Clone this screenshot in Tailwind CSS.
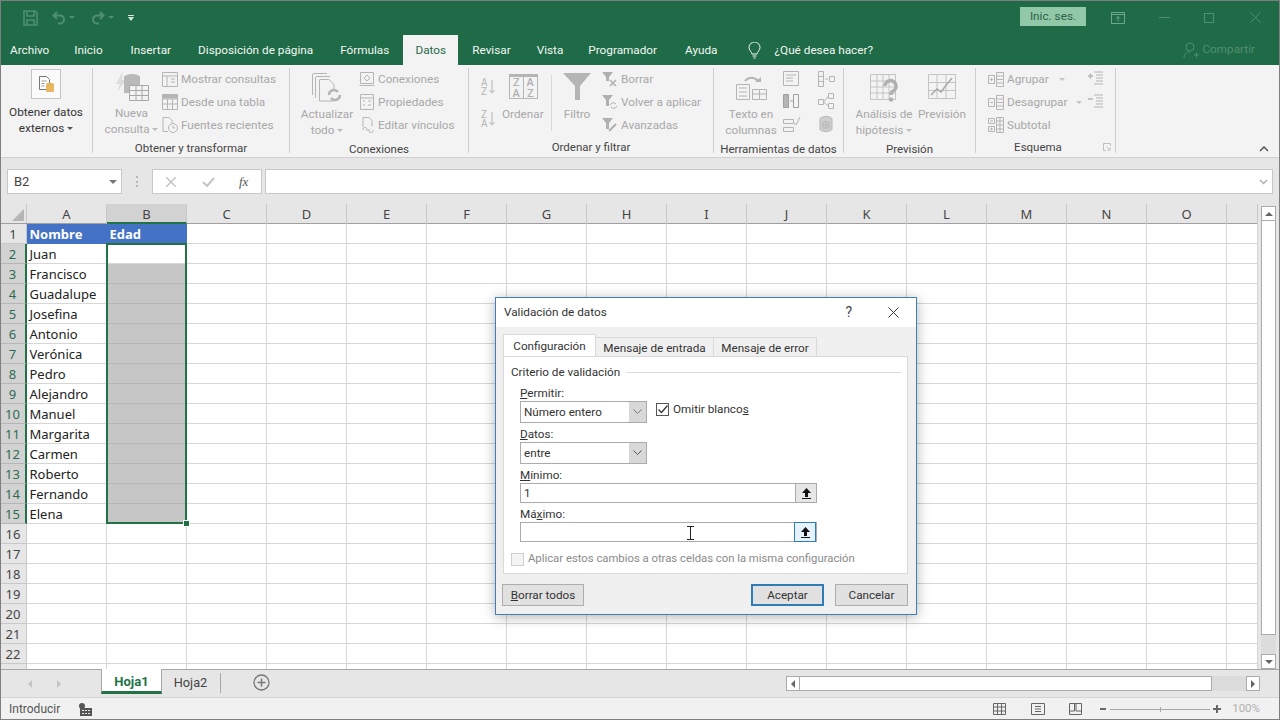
<!DOCTYPE html>
<html lang="es">
<head>
  <meta charset="UTF-8">
  <title>Validación de datos - Excel</title>
  <script src="https://cdn.jsdelivr.net/npm/@tailwindcss/browser@4"></script>
</head>
<body class="overflow-hidden bg-white">
<div class="relative w-[1280px] h-[720px] overflow-hidden flex flex-col font-['Roboto',sans-serif] text-[12px] text-[#333]">

  <!-- title bar -->
  <div class="h-[35px] bg-[#1f6b47] flex items-center shrink-0">
    <svg class="ml-[23px]" width="15" height="16" viewBox="0 0 15 16" fill="none" stroke="#4f8f70" stroke-width="1.6"><path d="M1 1h11l2 2v12H1zM4 1v5h7V1M4 15v-5h7v5"/></svg>
    <svg class="ml-[14px]" width="14" height="14" viewBox="0 0 14 14" fill="none" stroke="#4f8f70" stroke-width="2"><path d="M5 1 1.500 4.500 5 8M2 4.500h6a4 4 0 0 1 4 4v0a4 4 0 0 1-4 4H6"/></svg>
    <span class="ml-[3px] w-0 h-0 border-x-[3px] border-x-transparent border-t-[3px] border-t-[#4f8f70]"></span>
    <svg class="ml-[16px]" width="14" height="14" viewBox="0 0 14 14" fill="none" stroke="#4f8f70" stroke-width="2"><path d="M9 1l3.500 3.500L9 8M12 4.500H6a4 4 0 0 0-4 4v0a4 4 0 0 0 4 4h2"/></svg>
    <span class="ml-[3px] w-0 h-0 border-x-[3px] border-x-transparent border-t-[3px] border-t-[#4f8f70]"></span>
    <span class="ml-[14px] flex flex-col items-center gap-[1px]">
      <span class="w-[6px] h-[1px] bg-[#d5e6dc]"></span>
      <span class="w-0 h-0 border-x-[3px] border-x-transparent border-t-[4px] border-t-[#d5e6dc]"></span>
    </span>
    <div class="ml-auto flex items-center">
      <span class="w-[66px] h-[19px] mt-[-2px] bg-[#90c8a8] text-[#2f5f47] flex items-center justify-center text-[11.750px]">Inic. ses.</span>
      <svg class="ml-[25px]" width="14" height="12" viewBox="0 0 14 12" fill="none" stroke="#6ea78a"><path d="M.5.500h13v11H.500zM.5 2.500h13M7 9.500V4.500M5 6.500l2-2 2 2"/></svg>
      <span class="ml-[34px] w-[11px] h-[1px] bg-[#4f8f70]"></span>
      <span class="ml-[34px] w-[10px] h-[10px] border border-[#4f8f70]"></span>
      <svg class="ml-[36px] mr-[19px]" width="11" height="11" viewBox="0 0 11 11" stroke="#4f8f70"><path d="M.5.500l10 10M10.500.500l-10 10"/></svg>
    </div>
  </div>

  <!-- ribbon tabs -->
  <div class="h-[30px] bg-[#1f6b47] flex items-stretch shrink-0 text-[11.750px] text-[#f2f7f4]">
    <span class="ml-[10px] leading-[30px]">Archivo</span>
    <span class="ml-[25px] leading-[30px]">Inicio</span>
    <span class="ml-[28px] leading-[30px]">Insertar</span>
    <span class="ml-[27px] leading-[30px]">Disposición de página</span>
    <span class="ml-[27px] leading-[30px]">Fórmulas</span>
    <span class="ml-[14px] w-[55px] bg-[#f3f3f3] text-[#1f6b47] text-center leading-[30px]">Datos</span>
    <span class="ml-[14px] leading-[30px]">Revisar</span>
    <span class="ml-[26px] leading-[30px]">Vista</span>
    <span class="ml-[25px] leading-[30px]">Programador</span>
    <span class="ml-[28px] leading-[30px]">Ayuda</span>
    <svg class="ml-[31px] self-center" width="13" height="17" viewBox="0 0 13 17" fill="none" stroke="#f2f7f4"><path d="M4 12c0-2-3-3.500-3-6.500a5.500 5.500 0 0 1 11 0c0 3-3 4.500-3 6.500zM4.500 14h4M5.500 16h2"/></svg>
    <span class="ml-[13px] leading-[30px]">¿Qué desea hacer?</span>
    <div class="ml-auto mr-[25px] flex items-center text-[#4f8f70]">
      <svg width="16" height="17" viewBox="0 0 16 17" fill="none" stroke="#4f8f70"><circle cx="7" cy="5" r="4"/><path d="M1 16c0-4 2.500-6 6-6M11 13h5M13.500 10.500v5"/></svg>
      <span class="ml-[3px]">Compartir</span>
    </div>
  </div>

  <!-- ribbon -->
  <div class="h-[93px] bg-[#f3f3f3] border-b border-[#d0d0d0] flex shrink-0 text-[#a8a8a8] text-[11.750px] leading-[16px] relative">
    <!-- Obtener datos externos -->
    <div class="w-[93px] h-[85px] mt-[3px] border-r border-[#cfcfcf] flex flex-col items-center shrink-0">
      <div class="w-[30px] h-[30px] mt-[1px] bg-[#fafafa] border border-[#c4c4c4] flex items-center justify-center">
        <svg width="15" height="16" viewBox="0 0 15 16" fill="none"><path d="M.5.500h7l3 3v10h-10z" fill="#fff" stroke="#777"/><path d="M2.500 5h5M2.500 7.500h3M2.500 10h3" stroke="#999"/><rect x="7" y="7" width="8" height="9" rx="1.500" fill="#e9b660"/></svg>
      </div>
      <span class="mt-[5px] text-[#333]">Obtener datos</span>
      <span class="text-[#333]">externos <span class="inline-block align-middle w-0 h-0 border-x-[3px] border-x-transparent border-t-[3px] border-t-[#555]"></span></span>
    </div>

    <!-- Obtener y transformar -->
    <div class="w-[197px] h-[85px] mt-[3px] border-r border-[#cfcfcf] flex flex-col shrink-0">
      <div class="h-[72px] flex">
        <div class="w-[69px] ml-[4px] flex flex-col items-center">
          <svg class="mt-[3px]" width="34" height="30" viewBox="0 0 34 30"><path d="M8 0 1 13h4l-3 8 9-12H7z" fill="#dcdcdc"/><ellipse cx="17" cy="6" rx="8" ry="3" fill="#b9b9b9"/><path d="M9 6v16h16V6z" fill="#b9b9b9"/><path d="M14.500 14.500h19v15h-19zM14.500 19.500h19M14.500 24.500h19M21 14.500v15M27 14.500v15" fill="#f3f3f3" stroke="#a8a8a8"/></svg>
          <span class="mt-[4px]">Nueva</span>
          <span>consulta <span class="inline-block align-middle w-0 h-0 border-x-[3px] border-x-transparent border-t-[3px] border-t-[#bbb]"></span></span>
        </div>
        <div class="ml-[-4px] flex flex-col gap-[1px]">
          <div class="h-[22px] flex items-center"><svg width="16" height="15" viewBox="0 0 16 15" fill="none" stroke="#b5b5b5"><path d="M.5.500h15v14H.500zM.5 4h15M5 4v10.500M9 7h4M9 10h4"/></svg><span class="ml-[3px]">Mostrar consultas</span></div>
          <div class="h-[22px] flex items-center"><svg width="16" height="16" viewBox="0 0 16 16" fill="none" stroke="#b5b5b5"><path d="M.5.500h15v15H.500zM.5 5h15M.5 10h15M5.500 5v10.500M10.500 5v10.500"/><path d="M1 1h14v3H1z" fill="#b5b5b5"/></svg><span class="ml-[3px]">Desde una tabla</span></div>
          <div class="h-[22px] flex items-center"><svg width="16" height="16" viewBox="0 0 16 16" fill="none" stroke="#b5b5b5"><path d="M6 14.500H1V.500h6l3 3v3"/><circle cx="11" cy="11" r="4.500" fill="#f3f3f3"/><path d="M11 8.500V11h2"/></svg><span class="ml-[3px]">Fuentes recientes</span></div>
        </div>
      </div>
      <div class="text-center text-[#444] text-[11.500px] pt-[3px]">Obtener y transformar</div>
    </div>

    <!-- Conexiones -->
    <div class="w-[179px] h-[85px] mt-[3px] border-r border-[#cfcfcf] flex flex-col shrink-0">
      <div class="h-[72px] flex">
        <div class="w-[62px] ml-[6px] flex flex-col items-center">
          <svg class="mt-[5px]" width="30" height="30" viewBox="0 0 30 30" fill="none" stroke="#b5b5b5"><path d="M1 .500h14M.5 1v21M4 3.500h14M3.500 4v21M7.500 7v21h14M7.500 6.500H17l5 5v5"/><path d="M17 22a5 5 0 0 1 9-3M28 22a5 5 0 0 1-9 3" stroke-width="2.500"/></svg>
          <span class="mt-[3px]">Actualizar</span>
          <span>todo <span class="inline-block align-middle w-0 h-0 border-x-[3px] border-x-transparent border-t-[3px] border-t-[#bbb]"></span></span>
        </div>
        <div class="ml-[1px] flex flex-col gap-[1px]">
          <div class="h-[22px] flex items-center"><svg width="16" height="15" viewBox="0 0 16 15" fill="none" stroke="#b5b5b5"><path d="M1.500.500h13v11h-13zM.5 13.500h15M8 3l3 3-3 3-3-3z"/></svg><span class="ml-[3px]">Conexiones</span></div>
          <div class="h-[22px] flex items-center"><svg width="16" height="16" viewBox="0 0 16 16" fill="none" stroke="#b5b5b5"><path d="M1.500.500h13v15h-13zM1.500 4h13M4 7h2M9 7h3M4 11h2M9 11h3"/></svg><span class="ml-[3px]">Propiedades</span></div>
          <div class="h-[22px] flex items-center"><svg width="16" height="16" viewBox="0 0 16 16" fill="none" stroke="#b5b5b5"><path d="M4 10V.500h6l3 3V9"/><path d="M4 13a2 2 0 0 1 4-1M14 13a2 2 0 0 1-4 1M7 13h4"/></svg><span class="ml-[3px]">Editar vínculos</span></div>
        </div>
      </div>
      <div class="text-center text-[#444] text-[11.500px] pt-[3px]">Conexiones</div>
    </div>

    <!-- Ordenar y filtrar -->
    <div class="w-[245px] h-[85px] mt-[3px] border-r border-[#cfcfcf] flex flex-col shrink-0">
      <div class="h-[72px] flex">
        <div class="w-[82px] ml-[12px] flex flex-col">
          <div class="flex items-start h-[45px]">
            <div class="w-[20px] flex flex-col gap-[14px] mt-[10px] text-[10px] leading-[9px] text-[#b5b5b5]">
              <div class="flex items-center"><span class="flex flex-col"><span>A</span><span>Z</span></span><svg class="ml-[1px]" width="6" height="14" viewBox="0 0 6 14" fill="none" stroke="#b5b5b5"><path d="M3 0v13M.5 10 3 13l2.500-3"/></svg></div>
              <div class="flex items-center"><span class="flex flex-col"><span>Z</span><span>A</span></span><svg class="ml-[1px]" width="6" height="14" viewBox="0 0 6 14" fill="none" stroke="#b5b5b5"><path d="M3 0v13M.5 10 3 13l2.500-3"/></svg></div>
            </div>
            <div class="ml-[8px] mt-[6px] w-[29px] h-[25px] border border-[#b5b5b5] border-t-[3px] grid grid-cols-2 text-[11px] leading-[11px] text-center font-medium text-[#b0b0b0]">
              <span class="border-r border-[#b5b5b5]">Z<br>A</span><span>A<br>Z</span>
            </div>
          </div>
          <span class="ml-[21px] mt-[-7px]">Ordenar</span>
        </div>
        <div class="w-[1px] h-[56px] mt-[7px] ml-[-12px] bg-[#d8d8d8]"></div>
        <div class="w-[50px] flex flex-col items-center">
          <svg class="mt-[5px]" width="28" height="28" viewBox="0 0 28 28"><path d="M0 0h28L17 13v14h-5V13z" fill="#b5b5b5"/></svg>
          <span class="mt-[5px]">Filtro</span>
        </div>
        <div class="flex flex-col gap-[1px]">
          <div class="h-[22px] flex items-center"><svg width="16" height="15" viewBox="0 0 16 15" fill="none"><path d="M0 0h11L7 5v4H4V5z" fill="#b0b0b0"/><path d="M8 8l6 6M14 8l-6 6" stroke="#b0b0b0" stroke-width="1.500"/></svg><span class="ml-[3px]">Borrar</span></div>
          <div class="h-[22px] flex items-center"><svg width="16" height="15" viewBox="0 0 16 15" fill="none"><path d="M0 0h11L7 5v6H4V5z" fill="#b0b0b0"/><path d="M8 10a3.500 3.500 0 0 1 6-1M15 11a3.500 3.500 0 0 1-6 1" stroke="#b0b0b0"/></svg><span class="ml-[3px]">Volver a aplicar</span></div>
          <div class="h-[22px] flex items-center"><svg width="16" height="15" viewBox="0 0 16 15" fill="none"><path d="M0 0h11L7 5v6H4V5z" fill="#b0b0b0"/><path d="M7 13l7-7" stroke="#b0b0b0" stroke-width="2"/></svg><span class="ml-[3px]">Avanzadas</span></div>
        </div>
      </div>
      <div class="text-center text-[#444] text-[11.500px] pt-[3px]">Ordenar y filtrar</div>
    </div>

    <!-- Herramientas de datos -->
    <div class="w-[130px] h-[85px] mt-[3px] border-r border-[#cfcfcf] flex flex-col shrink-0">
      <div class="h-[72px] flex">
        <div class="w-[60px] ml-[7px] flex flex-col items-center">
          <svg class="mt-[5px]" width="31" height="28" viewBox="0 0 31 28" fill="none" stroke="#b5b5b5"><path d="M.5 11.500h13v15H.500zM3 15h8M3 19h8M3 23h8M16.500 16.500h14v10h-14zM16.500 21h14M23.500 16.500v10"/><path d="M9 8a8 8 0 0 1 13 0" stroke-width="2"/><path d="M19 9h6V4z" fill="#b5b5b5" stroke="none"/></svg>
          <span class="mt-[5px]">Texto en</span>
          <span>columnas</span>
        </div>
        <div class="ml-[2px] grid grid-cols-2 grid-rows-3 w-[53px] h-[69px] gap-x-[17px]">
          <svg class="mt-[3px]" width="16" height="16" viewBox="0 0 16 16" fill="none" stroke="#b5b5b5"><path d="M.5.500h15v14H.500zM3 4h10M3 7h7M3 10h7"/></svg>
          <svg class="mt-[3px]" width="18" height="16" viewBox="0 0 18 16" fill="none" stroke="#b5b5b5"><path d="M.5.500h5v15h-5zM.5 5.500h5M.5 10.500h5M11.500 5.500h5v5h-5zM7 8h3"/></svg>
          <svg class="mt-[2px]" width="16" height="16" viewBox="0 0 16 16" fill="#b5b5b5" stroke="#a0a0a0"><path d="M.5 1.500h5v13h-5z"/><path d="M10.500 1.500h5v13h-5z" fill="none"/><path d="M7 8h3"/></svg>
          <svg class="mt-[2px]" width="16" height="16" viewBox="0 0 16 16" fill="none" stroke="#b5b5b5"><path d="M.5 6.500h5v5h-5zM10.500.500h5v5h-5zM10.500 10.500h5v5h-5zM5.500 9l5-6M5.500 9l5 4"/></svg>
          <svg class="mt-[2px]" width="19" height="17" viewBox="0 0 19 17" fill="none" stroke="#b5b5b5"><path d="M.5 3.500h10v4H.500zM.5 11.500h10v4H.500zM10 6l3 3 4-8"/></svg>
          <svg class="mt-[2px]" width="16" height="16" viewBox="0 0 16 16" fill="#cfcfcf" stroke="#b5b5b5"><path d="M2 3a6 2.500 0 0 1 12 0v10a6 2.500 0 0 1-12 0z"/><path d="M5 6h6v6H5zM8 6v6M5 9h6" fill="none"/></svg>
        </div>
      </div>
      <div class="text-center text-[#444] text-[11.500px] pt-[3px]">Herramientas de datos</div>
    </div>

    <!-- Previsión -->
    <div class="w-[132px] h-[85px] mt-[3px] border-r border-[#cfcfcf] flex flex-col shrink-0">
      <div class="h-[72px] flex">
        <div class="w-[76px] ml-[2px] flex flex-col items-center">
          <svg class="mt-[6px]" width="29" height="29" viewBox="0 0 29 29" fill="none" stroke="#c4c4c4"><path d="M.5.500h25v25H.500zM.5 7h25M.5 13h25M.5 19h25M7 .500v25M13 .500v25M19 .500v25"/><path d="M15 12a5.500 5.500 0 1 1 8 5c-2 1-2 2-2 4" stroke="#b0b0b0" stroke-width="3.500"/><path d="M19.500 24h3v3h-3z" fill="#b0b0b0" stroke="#b0b0b0"/></svg>
          <span class="mt-[3px]">Análisis de</span>
          <span>hipótesis <span class="inline-block align-middle w-0 h-0 border-x-[3px] border-x-transparent border-t-[3px] border-t-[#bbb]"></span></span>
        </div>
        <div class="w-[52px] ml-[-6px] flex flex-col items-center">
          <svg class="mt-[6px]" width="28" height="25" viewBox="0 0 28 25" fill="none" stroke="#c4c4c4"><path d="M.5.500h27v24H.500zM.5 8.500h27M.5 16.500h27M9 .500v24M18 .500v24"/><path d="M3 21l6-6 4 3 6-8 5-6" stroke="#a8a8a8" stroke-width="1.500"/></svg>
          <span class="mt-[7px]">Previsión</span>
        </div>
      </div>
      <div class="text-center text-[#444] text-[11.500px] pt-[3px]">Previsión</div>
    </div>

    <!-- Esquema -->
    <div class="w-[140px] h-[85px] mt-[3px] border-r border-[#cfcfcf] flex flex-col shrink-0 relative">
      <div class="h-[72px] flex">
        <div class="ml-[12px] w-[100px] flex flex-col gap-[1px]">
          <div class="h-[22px] flex items-center"><svg width="16" height="15" viewBox="0 0 16 15" fill="none" stroke="#b5b5b5"><path d="M.5 3.500h6v8h-6zM2 7.500h3M3.500 6v3M8.500.500h7v14h-7zM8.500 4h7M8.500 7.500h7M8.500 11h7"/></svg><span class="ml-[3px]">Agrupar</span><span class="ml-[10px] w-0 h-0 border-x-[3px] border-x-transparent border-t-[3px] border-t-[#c4c4c4]"></span></div>
          <div class="h-[22px] flex items-center"><svg width="16" height="15" viewBox="0 0 16 15" fill="none" stroke="#b5b5b5"><path d="M.5 3.500h6v8h-6zM2 7.500h3M8.500.500h7v14h-7zM8.500 4h7M8.500 7.500h7M8.500 11h7"/></svg><span class="ml-[3px]">Desagrupar</span><span class="ml-[9px] w-0 h-0 border-x-[3px] border-x-transparent border-t-[3px] border-t-[#c4c4c4]"></span></div>
          <div class="h-[22px] flex items-center"><svg width="16" height="16" viewBox="0 0 16 16" fill="none" stroke="#b5b5b5"><path d="M.5 1.500h6v5h-6zM.5 9.500h6v5h-6zM8.500.500h7v15h-7zM8.500 4h7M8.500 8h7M8.500 12h7M12 .500v15M2 4h3M2 12h3M3.500 10.500v3"/></svg><span class="ml-[3px]">Subtotal</span></div>
        </div>
        <div class="flex flex-col gap-[8px] mt-[3px]">
          <svg width="15" height="15" viewBox="0 0 15 15" fill="none" stroke="#b5b5b5"><path d="M6 1h9M8 4h7M8 7h7M8 10h7M6 13h9"/><path d="M0 5h5M2.500 2.500v5" stroke-width="1.500"/></svg>
          <svg width="15" height="15" viewBox="0 0 15 15" fill="none" stroke="#b5b5b5"><path d="M6 1h9M8 4h7M8 7h7M8 10h7M6 13h9"/><path d="M0 5h5" stroke-width="1.500"/></svg>
        </div>
      </div>
      <div class="text-[#444] text-[11.500px] pt-[3px] w-[124px] text-center">Esquema</div>
      <svg class="absolute left-[127px] top-[75px]" width="8" height="8" viewBox="0 0 8 8" fill="none" stroke="#c0c0c0"><path d="M7.500 3V.500H.500v7H3M4 4l3 3M7 4.500V7H4.500"/></svg>
    </div>
    <svg class="absolute left-[1259px] top-[81px]" width="10" height="6" viewBox="0 0 10 6" fill="none" stroke="#555" stroke-width="1.500"><path d="M1 5l4-4 4 4"/></svg>
  </div>

  <!-- formula bar -->
  <div class="h-[46px] bg-[#e6e6e6] flex items-center shrink-0 pt-[1px]">
    <div class="ml-[7px] w-[115px] h-[25px] bg-white border border-[#c8c8c8] flex items-center pl-[6px] text-[13px] text-[#444]">
      B2
      <span class="ml-auto mr-[4px] w-0 h-0 border-x-[4px] border-x-transparent border-t-[4px] border-t-[#777]"></span>
    </div>
    <div class="ml-[14px] w-[2px] h-[11px] border-l-2 border-dotted border-[#b5b5b5]"></div>
    <div class="ml-[14px] w-[110px] h-[25px] bg-white border border-[#c8c8c8] flex items-center">
      <svg class="ml-[13px]" width="10" height="10" viewBox="0 0 10 10" stroke="#c4c4c4" stroke-width="1.500"><path d="M0 0l10 10M10 0 0 10"/></svg>
      <svg class="ml-[26px]" width="13" height="10" viewBox="0 0 13 10" fill="none" stroke="#c4c4c4" stroke-width="2"><path d="M1 5l4 4 7-8"/></svg>
      <span class="ml-[24px] text-[13px] italic font-['Liberation_Serif',serif] text-[#555]">fx</span>
    </div>
    <div class="ml-[3px] w-[1008px] h-[25px] bg-white border border-[#c8c8c8] flex items-center justify-end pr-[4px]">
      <svg width="9" height="6" viewBox="0 0 9 6" fill="none" stroke="#b0b0b0" stroke-width="1.500"><path d="M1 1l3.500 3.500L8 1"/></svg>
    </div>
  </div>

  <!-- sheet -->
  <div class="h-[465px] flex shrink-0 bg-[#e6e6e6]">
    <div id="grid" class="w-[1258px] relative overflow-hidden bg-white font-['Noto_Sans',sans-serif] text-[13px] leading-[20px] text-[#222]">
      <!-- selection of B2:B15 -->
      <div class="absolute left-[106px] top-[39px] w-[81px] h-[281px] border-2 border-[#217346] pointer-events-none"></div>
      <div class="absolute left-[184px] top-[317px] w-[5px] h-[5px] bg-[#217346] outline outline-white pointer-events-none"></div>
    </div>
    <!-- vertical scrollbar -->
    <div class="w-[22px] flex flex-col pl-[3px] pr-[4px] pt-[2px]">
      <div class="h-[15px] bg-white border border-[#ababab] flex items-center justify-center shrink-0"><span class="w-0 h-0 border-x-[4px] border-x-transparent border-b-[4px] border-b-[#666]"></span></div>
      <div class="h-[414px] bg-white border-x border-b border-[#ababab] shrink-0"></div>
      <div class="flex-1 bg-[#dcdcdc]"></div>
      <div class="h-[15px] bg-white border border-[#ababab] flex items-center justify-center shrink-0"><span class="w-0 h-0 border-x-[4px] border-x-transparent border-t-[4px] border-t-[#666]"></span></div>
    </div>
  </div>

  <!-- sheet tabs -->
  <div class="h-[28px] bg-[#e6e6e6] border-t border-[#a6a6a6] flex shrink-0 relative">
    <div class="w-[101px] flex items-center shrink-0">
      <span class="ml-[28px] w-0 h-0 border-y-[4px] border-y-transparent border-r-[4px] border-r-[#c4c4c4]"></span>
      <span class="ml-[25px] w-0 h-0 border-y-[4px] border-y-transparent border-l-[4px] border-l-[#c4c4c4]"></span>
    </div>
    <div class="w-[61px] h-[25px] mt-[-1px] bg-white border-x border-[#a6a6a6] border-b-[3px] border-b-[#217346] text-center text-[13px] font-bold text-[#217346] leading-[25px]">Hoja1</div>
    <div class="w-[59px] h-[20px] mt-[3px] border-r border-[#a6a6a6] text-center text-[12.750px] text-[#444] leading-[19px] pr-[1px]">Hoja2</div>
    <svg class="ml-[32px] mt-[4px]" width="17" height="17" viewBox="0 0 17 17" fill="none" stroke="#777"><circle cx="8.500" cy="8.500" r="7.500" stroke-width="1.300"/><path d="M4.500 8.500h8M8.500 4.500v8" stroke-width="1.500"/></svg>
    <!-- horizontal scrollbar -->
    <div class="absolute left-[786px] top-[6px] w-[474px] h-[15px] flex">
      <div class="w-[14px] bg-white border border-[#ababab] flex items-center justify-center"><span class="w-0 h-0 border-y-[4px] border-y-transparent border-r-[4px] border-r-[#666]"></span></div>
      <div class="w-[412px] bg-white border-y border-r border-[#ababab]"></div>
      <div class="w-[34px] bg-[#dcdcdc]"></div>
      <div class="w-[14px] bg-white border border-[#ababab] flex items-center justify-center"><span class="w-0 h-0 border-y-[4px] border-y-transparent border-l-[4px] border-l-[#666]"></span></div>
    </div>
  </div>

  <!-- status bar -->
  <div class="h-[23px] bg-[#f1f1f1] border-t border-[#d4d4d4] flex items-center shrink-0 text-[#555] text-[12px]">
    <span class="ml-[9px]">Introducir</span>
    <svg class="ml-[19px]" width="13" height="13" viewBox="0 0 13 13" fill="#555"><circle cx="3" cy="3" r="3"/><path d="M1 5h12v8H1z"/><path d="M3 7h2v1H3zM6 7h2v1H6zM9 7h2v1H9zM3 10h2v1H3zM6 10h2v1H6zM9 10h2v1H9z" fill="#f1f1f1"/></svg>
    <div class="ml-auto flex items-center mr-[20px]">
      <svg width="13" height="12" viewBox="0 0 13 12" fill="none" stroke="#666"><path d="M.5.500h12v11H.500zM.5 4h12M.5 8h12M4.500.500v11M8.500.500v11"/></svg>
      <svg class="ml-[25px]" width="14" height="12" viewBox="0 0 14 12" fill="none" stroke="#666"><path d="M.5.500h13v11H.500zM4 3.500h6M4 6h6M4 8.500h6"/></svg>
      <svg class="ml-[24px]" width="13" height="12" viewBox="0 0 13 12" fill="none" stroke="#666"><path d="M.5.500h12v11H.500zM.5 8h5V.500M7 .500V8h5.500"/></svg>
      <span class="ml-[18px] w-[6px] h-[2px] bg-[#666]"></span>
      <span class="ml-[4px] w-[100px] h-[1px] bg-[#a8a8a8] relative"><span class="absolute left-[50px] top-[-2px] w-[1px] h-[5px] bg-[#a8a8a8]"></span></span>
      <svg class="ml-[3px]" width="8" height="8" viewBox="0 0 8 8" stroke="#666" stroke-width="2"><path d="M0 4h8M4 0v8"/></svg>
      <span class="ml-[11px] text-[#b0b0b0] text-[11.500px]">100%</span>
    </div>
  </div>

  <!-- data validation dialog -->
  <div class="absolute left-[495px] top-[297px] w-[422px] h-[318px] bg-[#f0f0f0] border border-[#3f80b4] shadow-[0_2px_12px_rgba(0,0,0,0.3)] flex flex-col text-[11.700px] text-[#333]">
    <div class="h-[29px] bg-white flex items-center shrink-0">
      <span class="ml-[8px] text-[11.750px]">Validación de datos</span>
      <span class="ml-auto text-[14px] text-[#444]">?</span>
      <svg class="ml-[36px] mr-[17px]" width="11" height="11" viewBox="0 0 11 11" stroke="#333"><path d="M.5.500l10 10M10.500.500l-10 10"/></svg>
    </div>
    <div class="flex items-end ml-[7px] mt-[8px] h-[21px] shrink-0 relative z-10">
      <div class="w-[93px] h-[22px] bg-white border-x border-t border-[#d9d9d9] text-center leading-[22px]">Configuración</div>
      <div class="w-[118px] h-[19px] bg-[#f0f0f0] border-r border-t border-[#d9d9d9] text-center leading-[20px]">Mensaje de entrada</div>
      <div class="w-[103px] h-[19px] bg-[#f0f0f0] border-r border-t border-[#d9d9d9] text-center leading-[20px]">Mensaje de error</div>
    </div>
    <div class="ml-[7px] w-[405px] h-[218px] bg-white border border-[#d9d9d9] shrink-0 flex flex-col">
      <div class="flex items-center ml-[7px] mt-[8px] h-[16px] shrink-0">
        <span class="whitespace-nowrap">Criterio de validación</span>
        <span class="ml-[6px] w-[275px] h-[1px] bg-[#dcdcdc] mt-[-2px]"></span>
      </div>
      <div class="ml-[16px] mt-[3px] flex flex-col">
        <span class="h-[16px] leading-[18px]"><u>P</u>ermitir:</span>
        <div class="flex mt-[1px]">
          <div class="w-[127px] h-[22px] bg-white border border-[#ababab] flex items-center pl-[3px]">
            <span class="pt-[2px]">Número entero</span>
            <span class="ml-auto w-[17px] h-[20px] bg-[#d8d8d8] flex items-center justify-center"><svg width="9" height="6" viewBox="0 0 9 6" fill="none" stroke="#777"><path d="M.5.500l4 4 4-4"/></svg></span>
          </div>
          <div class="ml-[9px] flex items-center h-[16px]">
            <span class="w-[13px] h-[13px] bg-white border border-[#555] flex items-center justify-center"><svg width="10" height="9" viewBox="0 0 10 9" fill="none" stroke="#333" stroke-width="1.300"><path d="M.5 4.500l3 3 6-7"/></svg></span>
            <span class="ml-[4px] pt-[1px]">Omitir blanco<u>s</u></span>
          </div>
        </div>
        <span class="mt-[1px] h-[18px] leading-[20px]"><u>D</u>atos:</span>
        <div class="w-[127px] h-[22px] bg-white border border-[#ababab] flex items-center pl-[3px]">
          <span class="pt-[2px]">entre</span>
          <span class="ml-auto w-[17px] h-[20px] bg-[#d8d8d8] flex items-center justify-center"><svg width="9" height="6" viewBox="0 0 9 6" fill="none" stroke="#555"><path d="M.5.500l4 4 4-4"/></svg></span>
        </div>
        <span class="mt-[1px] h-[18px] leading-[20px]"><u>M</u>ínimo:</span>
        <div class="w-[297px] h-[20px] bg-white border border-[#ababab] flex items-center pl-[3px]">
          <span class="pt-[2px]">1</span>
          <span class="ml-auto w-[21px] h-[18px] bg-[#e6e6e6] border-l border-[#ababab] flex items-center justify-center"><svg width="11" height="11" viewBox="0 0 11 11" fill="#111"><path d="M5.500 0 10 5H7v4H4V5H1zM1 10h9v1H1z"/></svg></span>
        </div>
        <span class="mt-[1px] h-[18px] leading-[20px]">Má<u>x</u>imo:</span>
        <div class="w-[297px] h-[20px] bg-white border border-[#ababab] flex items-center relative">
          <svg class="absolute left-[166px] top-[3px]" width="7" height="14" viewBox="0 0 7 14" fill="none" stroke="#222"><path d="M0 .500h7M3.500.500v13M0 13.500h7"/></svg>
          <span class="ml-auto w-[22px] h-[20px] bg-[#e5f1fb] border border-[#2f7db8] flex items-center justify-center"><svg width="11" height="11" viewBox="0 0 11 11" fill="#111"><path d="M5.500 0 10 5H7v4H4V5H1zM1 10h9v1H1z"/></svg></span>
        </div>
      </div>
      <div class="ml-[7px] mt-[9px] flex items-center text-[#8a8a8a] text-[11.300px]">
        <span class="w-[13px] h-[13px] bg-[#f4f4f4] border border-[#cfcfcf]"></span>
        <span class="ml-[4px]">Aplicar estos cambios a otras celdas con la misma configuración</span>
      </div>
    </div>
    <div class="flex ml-[6px] mt-[10px]">
      <div class="w-[82px] h-[22px] bg-[#e1e1e1] border border-[#adadad] text-center leading-[21px]"><u>B</u>orrar todos</div>
      <div class="ml-[167px] w-[73px] h-[22px] bg-[#e1e1e1] border-2 border-[#2f7db8] text-center leading-[19px]">Aceptar</div>
      <div class="ml-[11px] w-[73px] h-[22px] bg-[#e1e1e1] border border-[#adadad] text-center leading-[21px]">Cancelar</div>
    </div>
  </div>

  <!-- window frame -->
  <div class="absolute inset-0 border border-[#7f7f7f] pointer-events-none"></div>
</div>

<script>
  // spreadsheet cells, B2:B15 is the selected range
  const names = ['Juan','Francisco','Guadalupe','Josefina','Antonio','Verónica','Pedro','Alejandro','Manuel','Margarita','Carmen','Roberto','Fernando','Elena'];
  const cols = ['A','B','C','D','E','F','G','H','I','J','K','L','M','N','O',''];
  const grid = document.getElementById('grid');
  const frag = document.createDocumentFragment();

  const head = document.createElement('div');
  head.className = 'flex h-[20px] bg-[#e6e6e6] text-[#444] border-b border-[#9f9f9f]';
  const corner = document.createElement('div');
  corner.className = 'w-[27px] h-[19px] border-r border-[#c8c8c8] shrink-0 flex items-end justify-end pr-[2px] pb-[2px]';
  corner.innerHTML = '<svg width="12" height="12" viewBox="0 0 12 12"><path d="M12 0v12H0z" fill="#b5b5b5"/></svg>';
  head.appendChild(corner);
  cols.forEach((c, i) => {
    const d = document.createElement('div');
    d.className = (c === '' ? 'w-[31px] ' : 'w-[80px] ') + 'h-[20px] shrink-0 text-center border-r border-[#c8c8c8]' + (c === 'B' ? ' bg-[#d2d2d2] text-[#444] border-b-2 border-b-[#217346]' : '');
    d.textContent = c;
    head.appendChild(d);
  });
  frag.appendChild(head);

  for (let r = 1; r <= 23; r++) {
    const row = document.createElement('div');
    row.className = 'flex h-[20px]';
    const selected = r >= 2 && r <= 15;
    const rh = document.createElement('div');
    rh.className = 'w-[27px] h-[20px] shrink-0 text-center border-r border-b ' + (selected ? 'bg-[#d2d2d2] text-[#2f6b50] border-[#b5b5b5] border-r-2 border-r-[#217346]' : 'bg-[#e6e6e6] text-[#444] border-[#c8c8c8]');
    if (r < 23) rh.textContent = r;  // row 23 is hidden behind the tab bar
    row.appendChild(rh);
    cols.forEach((c, i) => {
      const d = document.createElement('div');
      let cls = (c === '' ? 'w-[31px]' : 'w-[80px]') + ' h-[20px] shrink-0 pl-[2.500px] border-r border-b ';
      if (r === 1 && i < 2) cls += 'bg-[#4472c4] text-white font-bold border-[#4472c4]';
      else if (c === 'B' && r >= 3 && r <= 15) cls += 'bg-[#c6c6c6] border-[#b4b4b4]';
      else cls += 'border-[#d6d6d6]';
      d.className = cls;
      if (r === 1 && c === 'A') d.textContent = 'Nombre';
      if (r === 1 && c === 'B') d.textContent = 'Edad';
      if (selected && c === 'A') d.textContent = names[r - 2];
      row.appendChild(d);
    });
    frag.appendChild(row);
  }
  grid.insertBefore(frag, grid.firstChild);
</script>
</body>
</html>
